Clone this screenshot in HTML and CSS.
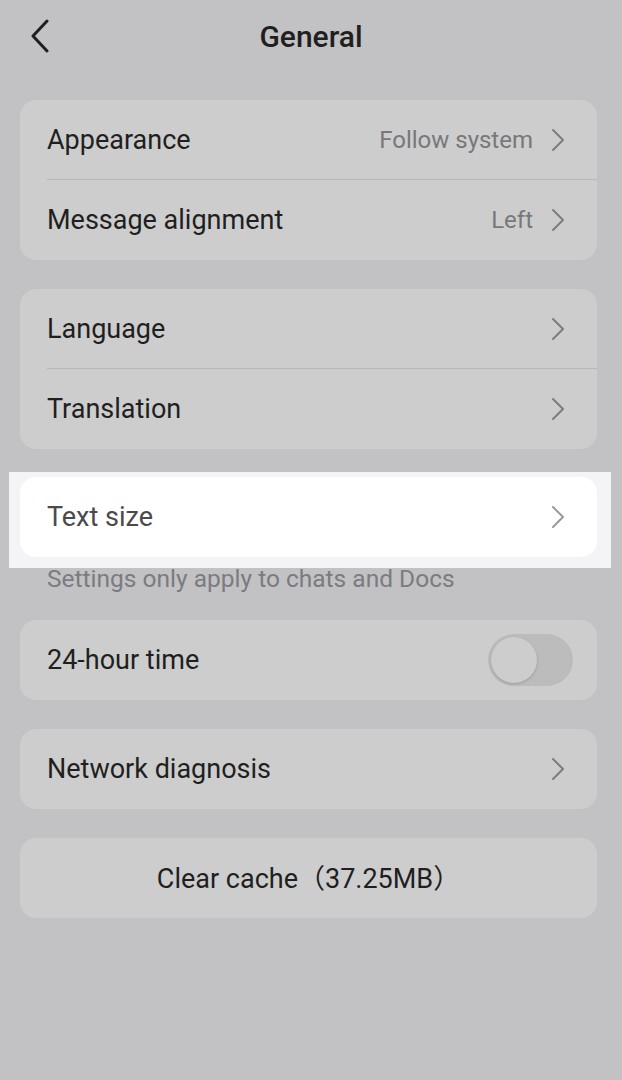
FILE: index.html
```html
<!DOCTYPE html>
<html lang="en">
<head>
	<meta charset="UTF-8">
	<title>General</title>
	<link rel="stylesheet" href="styles.css">
</head>
<body>
	<div class="header">
		<svg class="back" width="24" height="34" viewBox="0 0 24 34"><path d="M19 2 L5 17 L19 32" fill="none" stroke="#1f1f21" stroke-width="3" stroke-linecap="round" stroke-linejoin="round"/></svg>
		<h1>General</h1>
	</div>

	<div class="card">
		<div class="row">
			<span class="label">Appearance</span>
			<span class="value">Follow system</span>
			<svg class="arrow" width="14" height="24" viewBox="0 0 14 24"><path d="M2 2 L12 12 L2 22" fill="none" stroke="#7c7c7f" stroke-width="2" stroke-linecap="round" stroke-linejoin="round"/></svg>
		</div>
		<div class="row">
			<span class="label">Message alignment</span>
			<span class="value">Left</span>
			<svg class="arrow" width="14" height="24" viewBox="0 0 14 24"><path d="M2 2 L12 12 L2 22" fill="none" stroke="#7c7c7f" stroke-width="2" stroke-linecap="round" stroke-linejoin="round"/></svg>
		</div>
	</div>

	<div class="card">
		<div class="row">
			<span class="label">Language</span>
			<svg class="arrow" width="14" height="24" viewBox="0 0 14 24"><path d="M2 2 L12 12 L2 22" fill="none" stroke="#7c7c7f" stroke-width="2" stroke-linecap="round" stroke-linejoin="round"/></svg>
		</div>
		<div class="row">
			<span class="label">Translation</span>
			<svg class="arrow" width="14" height="24" viewBox="0 0 14 24"><path d="M2 2 L12 12 L2 22" fill="none" stroke="#7c7c7f" stroke-width="2" stroke-linecap="round" stroke-linejoin="round"/></svg>
		</div>
	</div>

	<div class="spot">
		<div class="card white">
			<div class="row">
				<span class="label soft">Text size</span>
				<svg class="arrow" width="14" height="24" viewBox="0 0 14 24"><path d="M2 2 L12 12 L2 22" fill="none" stroke="#9a9a9e" stroke-width="2" stroke-linecap="round" stroke-linejoin="round"/></svg>
			</div>
		</div>
	</div>
	<p class="note">Settings only apply to chats and Docs</p>

	<div class="card tight">
		<div class="row">
			<span class="label">24-hour time</span>
			<span class="switch"><span class="knob"></span></span>
		</div>
	</div>

	<div class="card">
		<div class="row">
			<span class="label">Network diagnosis</span>
			<svg class="arrow" width="14" height="24" viewBox="0 0 14 24"><path d="M2 2 L12 12 L2 22" fill="none" stroke="#7c7c7f" stroke-width="2" stroke-linecap="round" stroke-linejoin="round"/></svg>
		</div>
	</div>

	<div class="card">
		<div class="row center">
			<span class="label">Clear cache（37.25MB）</span>
		</div>
	</div>
</body>
</html>
```

FILE: styles.css
```css
body,h1,p{margin:0;padding:0;}
body{
	background-color:#c2c2c4;
	font-family:Roboto, "Noto Sans CJK SC", sans-serif;
	color:#1f1f21;
	padding:0 25px 200px 20px;
}
.header{
	height:71px;
	position:relative;
	display:flex;
	align-items:center;
	justify-content:center;
}
.back{
	position:absolute;
	left:8px;
	top:19px;
}
h1{
	font-size:30px;
	font-weight:500;
	margin-left:5px;
	margin-top:1px;
}
.card{
	background-color:#cdcdcd;
	border-radius:16px;
	margin-top:29px;
}
.row{
	height:80px;
	display:flex;
	align-items:center;
	padding:0 32px 0 27px;
	position:relative;
}
.row + .row::before{
	content:"";
	position:absolute;
	left:27px;
	right:0;
	top:-1px;
	height:1px;
	background-color:#b8b8ba;
}
.label{
	font-size:27px;
	flex:1;
}
.value{
	font-size:24px;
	color:#78787b;
	margin-right:18px;
}
.center{
	justify-content:center;
	padding:0;
}
.center .label{
	flex:none;
	margin-top:-3px;
}
.spot{
	background-color:#f4f4f6;
	margin:23px -14px 0 -11px;
	padding:5px 14px 11px 11px;
}
.white{
	background-color:#fff;
	margin-top:0;
}
.soft{
	color:#4a4a4d;
}
.note{
	font-size:24.5px;
	color:#7b7b80;
	margin:0 0 0 27px;
	height:52px;
	line-height:22px;
}
.tight{
	margin-top:0;
}
.switch{
	width:85px;
	height:52px;
	border-radius:26px;
	background-color:#bcbcbc;
	margin-right:-8px;
	position:relative;
}
.knob{
	position:absolute;
	left:3px;
	top:3px;
	width:46px;
	height:46px;
	border-radius:50%;
	background-color:#cdcdcd;
	box-shadow:0 1px 3px rgba(0,0,0,0.18);
}
```
